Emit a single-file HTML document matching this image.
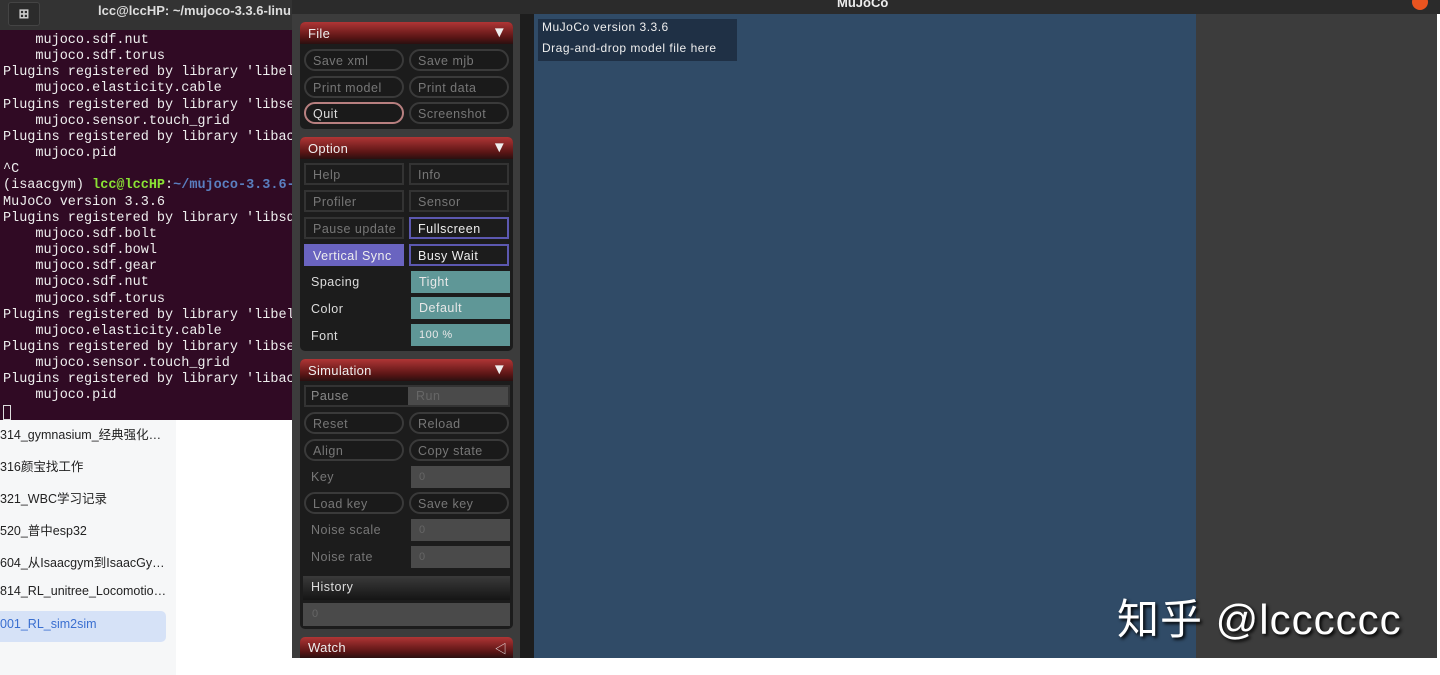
<!DOCTYPE html>
<html><head><meta charset="utf-8"><style>
*{margin:0;padding:0;box-sizing:border-box}
body{width:1440px;height:675px;overflow:hidden;background:#fff;position:relative;font-family:"Liberation Sans","Noto Sans CJK SC",sans-serif}
.a{position:absolute}
.term{left:0;top:0;width:292px;height:420px;background:#300a24}
.tt{left:0;top:0;width:292px;height:30px;background:#333;color:#ddd;font-size:13px;font-weight:bold}
.tl{position:absolute;left:3px;top:33px;font-family:"Liberation Mono",monospace;font-size:13.5px;line-height:16.15px;color:#eee;white-space:pre}
.side{left:0;top:420px;width:176px;height:255px;background:#f6f7f8}
.si{position:absolute;left:0;font-size:12.5px;color:#222;white-space:nowrap}
.mj{left:292px;top:0;width:1145px;height:658px;background:#3c3c3c}
.bar{left:292px;top:0;width:1148px;height:14px;background:#2b2b2b}
.sec{position:absolute;left:300px;width:213px;background:#1c1c1c;border-radius:5px}
.hd{position:absolute;left:300px;width:213px;height:22px;border-radius:5px 5px 0 0;background:linear-gradient(#b03535,#5a1515 70%,#2a1010);color:#eee;font-size:13px;padding:4px 0 0 8px;letter-spacing:.3px}
.hd b{position:absolute;right:6px;top:2px;font-weight:normal;font-size:15px}
.btn{position:absolute;width:100px;height:22px;border:2px solid #3a3a3a;border-radius:11px;color:#777;font-size:12.5px;padding:3px 0 0 7px;letter-spacing:.5px;background:#1a1a1a}
.sq{position:absolute;width:100px;height:22px;border:2px solid #333;color:#777;font-size:12.5px;padding:3px 0 0 7px;letter-spacing:.5px}
.lb{position:absolute;left:311px;font-size:12.5px;color:#ddd;letter-spacing:.5px}
.val{position:absolute;left:411px;width:99px;height:22px;background:#5f9797;color:#e8e8e8;font-size:12.5px;padding:4px 0 0 8px;letter-spacing:.5px}
.gv{position:absolute;left:411px;width:99px;height:22px;background:#4a4a4a;color:#666;font-size:11px;padding:5px 0 0 8px}
</style></head><body>
<div class="a term">
<div class="a tt"><div class="a" style="left:8px;top:2px;width:32px;height:24px;border:1px solid #444;background:#2b2b2b;border-radius:3px;color:#ccc;font-size:13px;text-align:center;line-height:22px">⊞</div><div class="a" style="left:98px;top:3px">lcc@lccHP: ~/mujoco-3.3.6-linu</div></div>
<div class="tl">    mujoco.sdf.nut
    mujoco.sdf.torus
Plugins registered by library 'libel
    mujoco.elasticity.cable
Plugins registered by library 'libse
    mujoco.sensor.touch_grid
Plugins registered by library 'libac
    mujoco.pid
^C
(isaacgym) <span style="color:#8ae234;font-weight:bold">lcc@lccHP</span>:<span style="color:#5a7fc0;font-weight:bold">~/mujoco-3.3.6-</span>
MuJoCo version 3.3.6
Plugins registered by library 'libsd
    mujoco.sdf.bolt
    mujoco.sdf.bowl
    mujoco.sdf.gear
    mujoco.sdf.nut
    mujoco.sdf.torus
Plugins registered by library 'libel
    mujoco.elasticity.cable
Plugins registered by library 'libse
    mujoco.sensor.touch_grid
Plugins registered by library 'libac
    mujoco.pid
<span style="display:inline-block;width:8px;height:15px;border:1px solid #ddd"></span></div>
</div>
<div class="a side">
<div class="si" style="top:4px">314_gymnasium_经典强化…</div>
<div class="si" style="top:36px">316颜宝找工作</div>
<div class="si" style="top:68px">321_WBC学习记录</div>
<div class="si" style="top:100px">520_普中esp32</div>
<div class="si" style="top:132px">604_从Isaacgym到IsaacGy…</div>
<div class="si" style="top:164px">814_RL_unitree_Locomotio…</div>
<div class="a" style="left:0;top:191px;width:166px;height:31px;background:#d6e2f7;border-radius:0 5px 5px 0"></div>
<div class="si" style="top:197px;color:#3a6fd0">001_RL_sim2sim</div>
</div>
<div class="a mj"></div>
<div class="a bar"><div class="a" style="left:545px;top:-5px;color:#eee;font-size:13px;font-weight:bold">MuJoCo</div><div class="a" style="left:1120px;top:-6px;width:16px;height:16px;border-radius:8px;background:#e95420"></div></div>
<div class="a" style="left:520px;top:14px;width:14px;height:644px;background:#1d1d1d"></div>
<div class="a" style="left:534px;top:14px;width:662px;height:644px;background:#304b67"></div>
<div class="a" style="left:538px;top:19px;width:199px;height:42px;background:#1f3045"></div>
<div class="a" style="left:542px;top:20px;color:#eee;font-size:12px;letter-spacing:.5px">MuJoCo version 3.3.6</div>
<div class="a" style="left:542px;top:41px;color:#eee;font-size:12px;letter-spacing:.5px">Drag-and-drop model file here</div>
<div class="a" style="left:1117px;top:586px;color:#fff;font-size:42px;letter-spacing:1px;text-shadow:2px 2px 3px #000;white-space:nowrap;font-family:'Liberation Sans','Noto Sans CJK SC',sans-serif">知乎 @lcccccc</div>

<div class="sec" style="top:22px;height:107px"></div>
<div class="hd" style="top:22px">File<b>▼</b></div>
<div class="btn" style="left:304px;top:49px">Save xml</div><div class="btn" style="left:409px;top:49px">Save mjb</div>
<div class="btn" style="left:304px;top:76px">Print model</div><div class="btn" style="left:409px;top:76px">Print data</div>
<div class="btn" style="left:304px;top:102px;border-color:#b88080;color:#ddd">Quit</div><div class="btn" style="left:409px;top:102px">Screenshot</div>

<div class="sec" style="top:137px;height:214px"></div>
<div class="hd" style="top:137px">Option<b>▼</b></div>
<div class="sq" style="left:304px;top:163px">Help</div><div class="sq" style="left:409px;top:163px">Info</div>
<div class="sq" style="left:304px;top:190px">Profiler</div><div class="sq" style="left:409px;top:190px">Sensor</div>
<div class="sq" style="left:304px;top:217px">Pause update</div><div class="sq" style="left:409px;top:217px;border-color:#5c58b0;color:#eee">Fullscreen</div>
<div class="sq" style="left:304px;top:244px;background:#6a64c0;border-color:#6a64c0;color:#eee">Vertical Sync</div><div class="sq" style="left:409px;top:244px;border-color:#5c58b0;color:#eee">Busy Wait</div>
<div class="lb" style="top:275px">Spacing</div><div class="val" style="top:271px">Tight</div>
<div class="lb" style="top:302px">Color</div><div class="val" style="top:297px">Default</div>
<div class="lb" style="top:329px">Font</div><div class="val" style="top:324px;font-size:11px;padding-top:5px">100 %</div>

<div class="sec" style="top:359px;height:270px"></div>
<div class="hd" style="top:359px">Simulation<b>▼</b></div>
<div class="a" style="left:304px;top:385px;width:206px;height:22px;background:#4a4a4a;border:2px solid #333"></div>
<div class="a" style="left:306px;top:387px;width:102px;height:18px;background:#1a1a1a"></div>
<div class="lb" style="top:389px;color:#888">Pause</div><div class="lb" style="left:416px;top:389px;color:#666">Run</div>
<div class="btn" style="left:304px;top:412px">Reset</div><div class="btn" style="left:409px;top:412px">Reload</div>
<div class="btn" style="left:304px;top:439px">Align</div><div class="btn" style="left:409px;top:439px">Copy state</div>
<div class="lb" style="top:470px;color:#777">Key</div><div class="gv" style="top:466px">0</div>
<div class="btn" style="left:304px;top:492px">Load key</div><div class="btn" style="left:409px;top:492px">Save key</div>
<div class="lb" style="top:523px;color:#777">Noise scale</div><div class="gv" style="top:519px">0</div>
<div class="lb" style="top:550px;color:#777">Noise rate</div><div class="gv" style="top:546px">0</div>
<div class="a" style="left:303px;top:576px;width:207px;height:24px;background:linear-gradient(#3a3a3a,#151515)"></div>
<div class="lb" style="top:580px">History</div>
<div class="a" style="left:303px;top:603px;width:207px;height:23px;background:#4a4a4a;color:#666;font-size:11px;padding:5px 0 0 9px">0</div>

<div class="hd" style="top:637px;height:21px;padding-top:3px">Watch<b style="font-size:12px;top:3px">◁</b></div>
</body></html>
